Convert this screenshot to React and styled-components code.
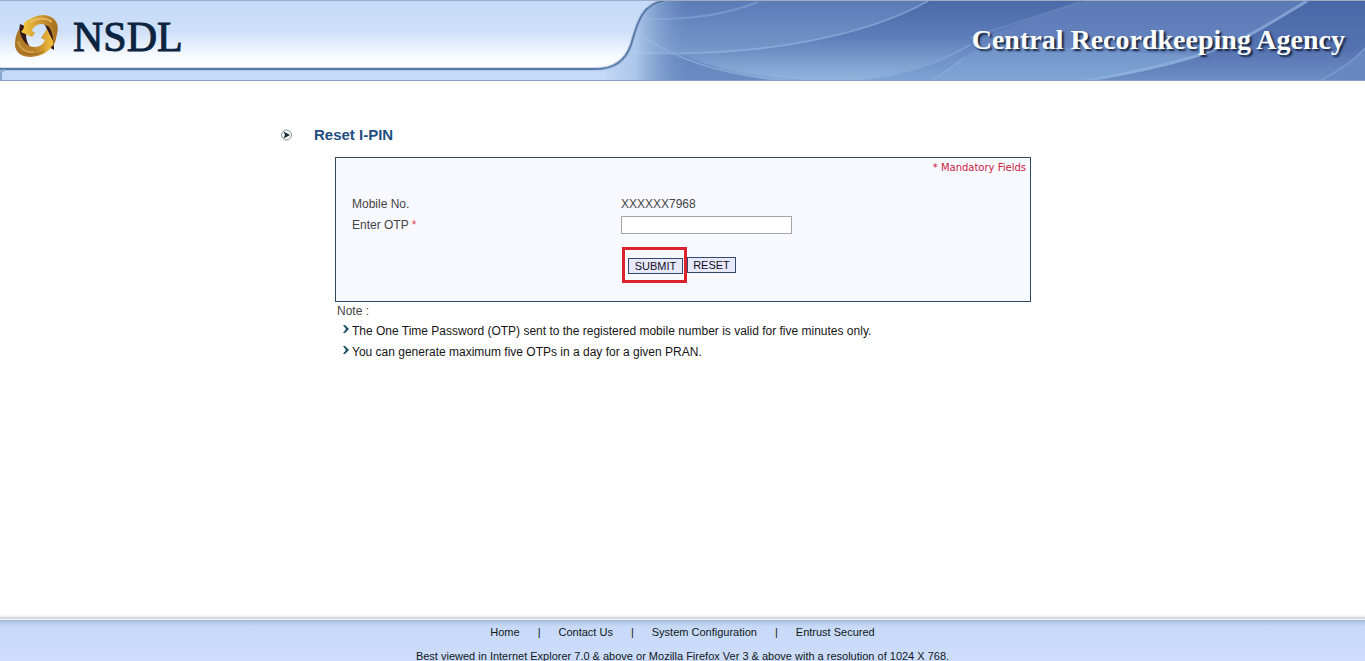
import React, { useState } from "react";
import styled, { createGlobalStyle } from "styled-components";

const GlobalStyle = createGlobalStyle`
  * {
    box-sizing: border-box;
  }

  body {
    margin: 0;
    background: #fff;
    font-family: Arial, "Liberation Sans", sans-serif;
    font-size: 12px;
    color: #444;
  }
`;

const Page = styled.div`
  min-height: 100vh;
  display: flex;
  flex-direction: column;
`;

const HeaderBar = styled.header`
  position: relative;
  height: 81px;
  padding: 0 20px 2px 14px;
  display: flex;
  align-items: center;
  justify-content: space-between;
`;

const HeaderArt = styled.svg`
  position: absolute;
  inset: 0;
  width: 100%;
  height: 100%;
  z-index: -1;
`;

const Brand = styled.a`
  display: flex;
  align-items: center;
  gap: 13px;
  padding-bottom: 6px;
  color: #0c2440;
  text-decoration: none;
`;

const LogoIcon = styled.svg`
  width: 46px;
  height: 44px;
`;

const BrandName = styled.span`
  font-family: "Liberation Serif", serif;
  font-size: 42px;
  line-height: 44px;
  -webkit-text-stroke: 1px #0c2440;
`;

const AgencyName = styled.div`
  font-family: "Liberation Serif", serif;
  font-size: 28px;
  font-weight: bold;
  line-height: 36px;
  color: #fff;
  text-shadow: 2px 2px 2px #10203e;
`;

const Main = styled.main`
  flex: 1;
  width: 100%;
  max-width: 803px;
  margin: 0 auto;
  padding-top: 44px;
`;

const TitleRow = styled.div`
  display: flex;
  align-items: center;
  gap: 21px;
  height: 20px;

  svg {
    margin-left: -1px;
  }
`;

const Title = styled.h1`
  margin: 0;
  font-size: 15px;
  line-height: 20px;
  color: #1f4e80;
`;

const Body = styled.div`
  margin: 12px 53px 0 54px;
`;

const Panel = styled.form`
  border: 1px solid #2c4a60;
  background: #f8f9ff;
  padding-bottom: 18px;
`;

const Mandatory = styled.p`
  margin: 0 4px 15px;
  text-align: right;
  font-family: Verdana, "DejaVu Sans", sans-serif;
  font-size: 10px;
  line-height: 20px;
  color: #c8193c;
`;

const Row = styled.div`
  display: grid;
  grid-template-columns: 269px 1fr;
  align-items: center;
  min-height: 21px;
  padding-left: 16px;
`;

const Star = styled.span`
  color: #e0474c;
`;

const OtpInput = styled.input`
  width: 171px;
  height: 18px;
  padding: 0 4px;
  border: 1px solid #a6a6a6;
  background: #fff;
  font: inherit;
`;

const Actions = styled.div`
  display: flex;
  align-items: center;
  margin: 12px 0 0 286px;
`;

const Highlight = styled.div`
  display: flex;
  border: 3px solid #dc222c;
  padding: 8px 1px 6px 3px;
`;

const Button = styled.button`
  width: ${(props) => props.$width};
  height: 16px;
  padding: 0;
  border: 1px solid #34496e;
  background: #e8e8fc;
  color: #101020;
  font-family: inherit;
  font-size: 11px;
  line-height: 14px;
`;

const Notes = styled.section`
  padding-left: 2px;
  line-height: 21px;
`;

const NoteHeading = styled.p`
  margin: 0;
  line-height: 19px;
`;

const NoteList = styled.ul`
  list-style: none;
  margin: 0;
  padding: 0 0 0 6px;
  color: #151515;
`;

const NoteItem = styled.li`
  display: flex;
  align-items: flex-start;
  gap: 3px;

  svg {
    flex: none;
    margin-top: 4px;
  }
`;

const FooterBar = styled.footer`
  padding-top: 5px;
  text-align: center;
  font-size: 11px;
  color: #101820;
  background: linear-gradient(
    #fff 0,
    #d9dbe3 3px,
    #c6cddb 4px,
    #fff 4px,
    #fff 5px,
    #9fb7da 5px,
    #b9cdec 8px,
    #c8daf8 12px,
    #cdddfb 100%
  );
`;

const FooterLinks = styled.nav`
  display: flex;
  justify-content: center;
  gap: 18px;
  line-height: 24px;

  a {
    color: inherit;
    text-decoration: none;
  }
`;

const Support = styled.p`
  margin: 7px 0 0;
  line-height: 10px;
`;

const links = ["Home", "Contact Us", "System Configuration", "Entrust Secured"];

const notes = [
  "The One Time Password (OTP) sent to the registered mobile number is valid for five minutes only.",
  "You can generate maximum five OTPs in a day for a given PRAN.",
];

const tabEdge =
  "M0 69 H596 C616 69 626 59 631 45 C637 25 641 4 664 1";

const Header = () => (
  <HeaderBar>
    <HeaderArt viewBox="0 0 1365 81" preserveAspectRatio="none" aria-hidden="true">
      <defs>
        <linearGradient id="sky" x1="0" y1="0" x2="0" y2="81" gradientUnits="userSpaceOnUse">
          <stop offset="0" stopColor="#5b7ab6" />
          <stop offset="0.5" stopColor="#7090c5" />
          <stop offset="1" stopColor="#84a9d6" />
        </linearGradient>
        <linearGradient id="deep" x1="0" y1="0" x2="0" y2="81" gradientUnits="userSpaceOnUse">
          <stop offset="0" stopColor="#4a69a7" />
          <stop offset="0.45" stopColor="#5d7cb8" />
          <stop offset="1" stopColor="#93b6df" />
        </linearGradient>
        <linearGradient id="mid" x1="0" y1="0" x2="0" y2="81" gradientUnits="userSpaceOnUse">
          <stop offset="0" stopColor="#5d79b5" />
          <stop offset="0.5" stopColor="#6482bd" />
          <stop offset="1" stopColor="#7ea4d4" />
        </linearGradient>
        <linearGradient id="far" x1="0" y1="0" x2="0" y2="81" gradientUnits="userSpaceOnUse">
          <stop offset="0" stopColor="#4967a6" />
          <stop offset="0.6" stopColor="#5572b0" />
          <stop offset="1" stopColor="#6f8ec4" />
        </linearGradient>
        <linearGradient id="mist" x1="600" y1="0" x2="690" y2="0" gradientUnits="userSpaceOnUse">
          <stop offset="0" stopColor="#c6dcf7" />
          <stop offset="0.4" stopColor="#b4cdee" stopOpacity="0.9" />
          <stop offset="1" stopColor="#7795c8" stopOpacity="0" />
        </linearGradient>
        <linearGradient id="tab" x1="0" y1="0" x2="0" y2="1">
          <stop offset="0" stopColor="#c3daf7" />
          <stop offset="0.45" stopColor="#cfe0f9" />
          <stop offset="0.8" stopColor="#f7faff" />
          <stop offset="1" stopColor="#fff" />
        </linearGradient>
      </defs>
      <rect width="1365" height="81" fill="url(#sky)" />
      <path d="M600 54 H680 Q730 76 790 81 H600Z" fill="#5f7fb9" opacity="0.7" />
      <path d="M680 54 C770 54 870 34 927 1 H1085 Q1010 25 970 45 Q910 81 840 81 Q750 81 680 54Z" fill="url(#deep)" />
      <path d="M840 81 Q910 78 970 45 Q1010 25 1085 1 H1310 C1260 30 1250 40 1200 56 Q1150 72 1085 81Z" fill="url(#mid)" />
      <path d="M932 81 Q962 55 990 44 L1200 56 Q1150 72 1085 81Z" fill="#86abd9" opacity="0.3" />
      <path d="M1085 81 Q1150 72 1200 56 C1250 40 1260 30 1310 1 H1365 V81Z" fill="url(#far)" />
      <path d="M1320 81 Q1350 65 1365 48 V81Z" fill="#6887c0" />
      <g fill="none" stroke="#96b7e2" strokeWidth="2" opacity="0.6">
        <path d="M630 18 Q705 23 758 2" opacity="0.7" />
        <path d="M620 52 C760 60 870 34 928 1" />
        <path d="M645 38 Q700 74 790 81" />
        <path d="M850 81 Q915 77 970 45" opacity="0.7" />
        <path d="M970 38 Q1010 25 1080 2" opacity="0.4" />
        <path d="M930 81 Q950 70 965 57" opacity="0.5" />
        <path d="M1085 81 Q1150 70 1200 55 C1250 38 1260 29 1307 1" strokeWidth="3" />
        <path d="M1320 81 Q1350 65 1365 48" opacity="0.6" />
      </g>
      <rect x="600" width="90" height="81" fill="url(#mist)" />
      <rect y="69" width="601" height="12" fill="#c4daf8" />
      <path d={`${tabEdge} L0 1Z`} fill="url(#tab)" />
      <path d={tabEdge} fill="none" stroke="#9db8da" strokeWidth="4" opacity="0.5" />
      <path d={tabEdge} fill="none" stroke="#597ba9" strokeWidth="2" />
      <path d="M1 81 V73 Q1 70 5 70" fill="none" stroke="#8ca7cd" strokeWidth="2" />
      <path d="M0 0.5 H1365" stroke="#a0acc5" />
      <path d="M0 80.5 H1365" stroke="#8a9fc3" />
    </HeaderArt>
    <Brand href="#">
      <LogoIcon viewBox="0 0 46 44" aria-hidden="true">
        <defs>
          <linearGradient id="gold" x1="8" y1="20" x2="44" y2="20" gradientUnits="userSpaceOnUse">
            <stop offset="0" stopColor="#f4c93c" />
            <stop offset="0.35" stopColor="#d9a637" />
            <stop offset="1" stopColor="#a56d1f" />
          </linearGradient>
          <linearGradient id="goldLow" x1="1" y1="24" x2="39" y2="24" gradientUnits="userSpaceOnUse">
            <stop offset="0" stopColor="#a87526" />
            <stop offset="0.5" stopColor="#b98029" />
            <stop offset="1" stopColor="#f2bf3b" />
          </linearGradient>
        </defs>
        <path d="M6 9 L13 12 Q10 24 16 32 L8 31 Q4 18 6 9Z" fill="#35181a" />
        <path d="M30 8 Q38 9 40 18 L40 35 L35 32 Q36 18 30 8Z" fill="#35181a" />
        <path d="M5 14 Q1 21 1 29 C1 38 8 42 17 42 Q32 41 39 30 L39 26 L33 14 L27 23 L31 25 Q28 32 21 32 Q9 32 5 14Z" fill="url(#goldLow)" />
        <path d="M10 8 Q20 0 30 0 C41 1 46 9 43 19 Q42 26 39 32 Q40 19 35 12 Q29 7 23 10 Q19 12 18 16 L21 18 L18 22 L7 17 Q11 13 10 8Z" fill="url(#gold)" />
        <path d="M16 7 Q28 0 38 7" fill="none" stroke="#eecb72" strokeWidth="2" opacity="0.7" />
        <path d="M4 26 Q7 38 20 37" fill="none" stroke="#e3b456" strokeWidth="2" opacity="0.6" />
        <path d="M9 37 Q18 43 30 36" fill="none" stroke="#82511a" strokeWidth="1" opacity="0.6" />
      </LogoIcon>
      <BrandName>NSDL</BrandName>
    </Brand>
    <AgencyName>Central Recordkeeping Agency</AgencyName>
  </HeaderBar>
);

const Footer = () => (
  <FooterBar>
    <FooterLinks>
      {links.map((link, i) => (
        <React.Fragment key={link}>
          {i > 0 && <span>|</span>}
          <a href="#">{link}</a>
        </React.Fragment>
      ))}
    </FooterLinks>
    <Support>
      Best viewed in Internet Explorer 7.0 &amp; above or Mozilla Firefox Ver 3 &amp; above with a
      resolution of 1024 X 768.
    </Support>
  </FooterBar>
);

const App = () => {
  const [otp, setOtp] = useState("");

  const handleSubmit = (e) => {
    e.preventDefault();
  };

  return (
    <>
      <GlobalStyle />
      <Page>
        <Header />
        <Main>
          <TitleRow>
            <svg width="13" height="13" viewBox="0 0 13 13" aria-hidden="true">
              <circle cx="6.5" cy="6" r="5" fill="#f6f8f8" stroke="#899599" />
              <path d="M3.5 2.5 L10 6 L3.5 9.5 L5 6Z" fill="#152c34" />
            </svg>
            <Title>Reset I-PIN</Title>
          </TitleRow>
          <Body>
            <Panel onSubmit={handleSubmit}>
              <Mandatory>* Mandatory Fields</Mandatory>
              <Row>
                <span>Mobile No.</span>
                <span>XXXXXX7968</span>
              </Row>
              <Row>
                <label htmlFor="otp">
                  Enter OTP <Star>*</Star>
                </label>
                <OtpInput id="otp" value={otp} onChange={(e) => setOtp(e.target.value)} />
              </Row>
              <Actions>
                <Highlight>
                  <Button type="submit" $width="55px">SUBMIT</Button>
                </Highlight>
                <Button type="button" $width="49px" onClick={() => setOtp("")}>RESET</Button>
              </Actions>
            </Panel>
            <Notes>
              <NoteHeading>Note :</NoteHeading>
              <NoteList>
                {notes.map((note) => (
                  <NoteItem key={note}>
                    <svg width="6" height="8" viewBox="0 0 6 8" aria-hidden="true">
                      <path d="M0 0 H2 L6 4 L2 8 H0 L3 4Z" fill="#174c60" />
                    </svg>
                    {note}
                  </NoteItem>
                ))}
              </NoteList>
            </Notes>
          </Body>
        </Main>
        <Footer />
      </Page>
    </>
  );
};

export default App;
